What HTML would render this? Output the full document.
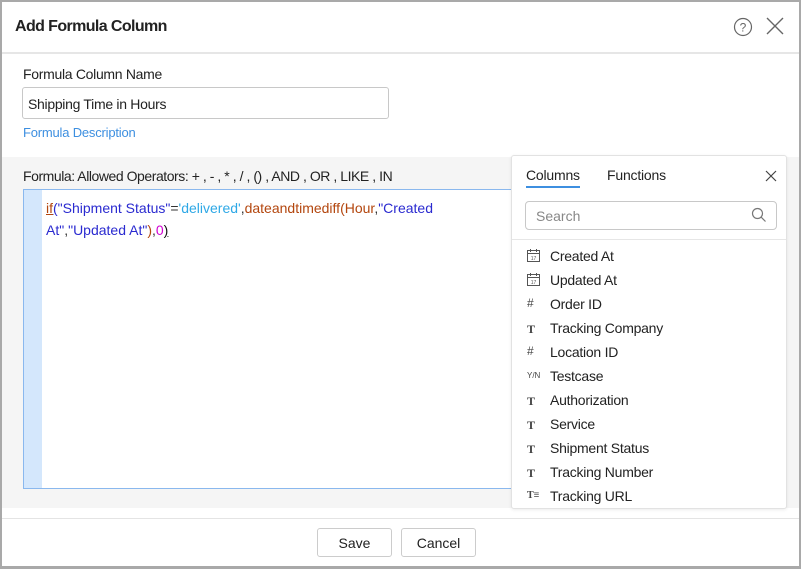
<!DOCTYPE html>
<html><head><style>
*{box-sizing:border-box;margin:0;padding:0}
body{width:801px;height:569px;overflow:hidden;background:#fff;font-family:"Liberation Sans",sans-serif;color:#222;position:relative}
.frame{position:absolute;left:0;top:0;width:801px;height:569px;border:2px solid #a9a9a9;border-bottom-width:3px}
.abs{position:absolute}
.t{font-size:14px;white-space:nowrap}
</style></head><body>
<div class="frame"></div>
<div class="abs" style="left:15px;top:18px;font-size:16px;font-weight:bold;letter-spacing:-0.6px">Add Formula Column</div>
<svg class="abs" style="left:733px;top:17px" width="20" height="20"><circle cx="10" cy="10" r="8.5" fill="none" stroke="#666" stroke-width="1.2"/><text x="10" y="14.5" font-size="12" text-anchor="middle" fill="#666" font-family="Liberation Sans">?</text></svg>
<svg class="abs" style="left:766px;top:17px" width="18" height="18"><path d="M1 1L17 17M17 1L1 17" stroke="#666" stroke-width="1.4"/></svg>
<div class="abs" style="left:2px;top:52px;width:797px;height:2px;background:#e6e6e6"></div>
<div class="abs t" style="left:23px;top:66px;letter-spacing:-0.3px">Formula Column Name</div>
<div class="abs" style="left:22px;top:87px;width:367px;height:32px;border:1px solid #c8c8c8;border-radius:3px"></div>
<div class="abs t" style="left:28px;top:96px;letter-spacing:-0.3px">Shipping Time in Hours</div>
<div class="abs" style="left:23px;top:125px;font-size:13px;color:#3d8fe0;letter-spacing:-0.2px">Formula Description</div>
<div class="abs" style="left:2px;top:157px;width:797px;height:351px;background:#f5f5f5"></div>
<div class="abs t" style="left:23px;top:168px;letter-spacing:-0.45px">Formula: Allowed Operators: + , - , * , / , () , AND , OR , LIKE , IN</div>
<div class="abs" style="left:23px;top:189px;width:490px;height:300px;background:#fff;border:1px solid #8ab8ee"></div>
<div class="abs" style="left:24px;top:190px;width:18px;height:298px;background:#d4e7fc"></div>
<div class="abs t" style="left:46px;top:197px;line-height:22px;color:#2a2ad0;white-space:normal;width:420px">
<span style="color:#b3460e;text-decoration:underline">if</span><span style="text-decoration:underline">(</span>"Shipment Status"<span style="color:#333">=</span><span style="color:#2ea8e6">'delivered'</span><span style="color:#333">,</span><span style="color:#b3460e">dateandtimediff(Hour</span><span style="color:#333">,</span>"Created At"<span style="color:#333">,</span>"Updated At"<span style="color:#b3460e">)</span><span style="color:#333">,</span><span style="color:#d000d0">0</span><span style="color:#111;text-decoration:underline">)</span></div>
<div class="abs" style="left:511px;top:155px;width:276px;height:354px;background:#fff;border:1px solid #e2e2e2;border-radius:3px;box-shadow:0 1px 3px rgba(0,0,0,.08)"></div>
<div class="abs t" style="left:526px;top:167px;letter-spacing:-0.2px">Columns</div>
<div class="abs" style="left:526px;top:186px;width:54px;height:2px;background:#3d8fe0"></div>
<div class="abs t" style="left:607px;top:167px;letter-spacing:-0.2px">Functions</div>
<svg class="abs" style="left:765px;top:170px" width="12" height="12"><path d="M1 1L11 11M11 1L1 11" stroke="#444" stroke-width="1.2"/></svg>
<div class="abs" style="left:525px;top:201px;width:252px;height:29px;border:1px solid #c8c8c8;border-radius:4px"></div>
<div class="abs t" style="left:536px;top:208px;color:#888">Search</div>
<svg class="abs" style="left:751px;top:207px" width="16" height="16"><circle cx="6.5" cy="6.5" r="5" fill="none" stroke="#777" stroke-width="1.2"/><path d="M10 10L14.5 14.5" stroke="#777" stroke-width="1.2"/></svg>
<div class="abs" style="left:512px;top:239px;width:274px;height:1px;background:#e6e6e6"></div>
<div class="abs" style="left:526px;top:248px">
<style>.r{position:absolute;left:0;height:24px;width:250px}.r span{position:absolute;left:24px;top:0;font-size:14px;white-space:nowrap;letter-spacing:-0.25px}.r i{position:absolute;left:1px;top:2px;font-style:normal;font-size:12px;color:#444;font-weight:bold;font-family:"Liberation Serif",serif}</style>
<div class="r" style="top:0"><svg style="position:absolute;left:1px;top:1px" width="13" height="13"><rect x="0.5" y="1.5" width="12" height="11" fill="none" stroke="#555"/><path d="M0.5 4.5H12.5M3.5 0V3M9.5 0V3" stroke="#555"/><text x="6.5" y="11" font-size="5" text-anchor="middle" fill="#555">17</text></svg><span>Created At</span></div>
<div class="r" style="top:24px"><svg style="position:absolute;left:1px;top:1px" width="13" height="13"><rect x="0.5" y="1.5" width="12" height="11" fill="none" stroke="#555"/><path d="M0.5 4.5H12.5M3.5 0V3M9.5 0V3" stroke="#555"/><text x="6.5" y="11" font-size="5" text-anchor="middle" fill="#555">17</text></svg><span>Updated At</span></div>
<div class="r" style="top:48px"><i style="font-family:'Liberation Sans';font-weight:normal;top:0">#</i><span>Order ID</span></div>
<div class="r" style="top:72px"><i>T</i><span>Tracking Company</span></div>
<div class="r" style="top:96px"><i style="font-family:'Liberation Sans';font-weight:normal;top:0">#</i><span>Location ID</span></div>
<div class="r" style="top:120px"><i style="font-size:8px;font-family:'Liberation Sans';top:3px;font-weight:normal">Y/N</i><span>Testcase</span></div>
<div class="r" style="top:144px"><i>T</i><span>Authorization</span></div>
<div class="r" style="top:168px"><i>T</i><span>Service</span></div>
<div class="r" style="top:192px"><i>T</i><span>Shipment Status</span></div>
<div class="r" style="top:216px"><i>T</i><span>Tracking Number</span></div>
<div class="r" style="top:240px"><i style="font-size:10px">T≡</i><span>Tracking URL</span></div>
</div>
<div class="abs" style="left:2px;top:518px;width:797px;height:1px;background:#e4e4e4"></div>
<div class="abs t" style="left:317px;top:528px;width:75px;height:29px;border:1px solid #ccc;border-radius:3px;text-align:center;line-height:28px">Save</div>
<div class="abs t" style="left:401px;top:528px;width:75px;height:29px;border:1px solid #ccc;border-radius:3px;text-align:center;line-height:28px">Cancel</div>
</body></html>
